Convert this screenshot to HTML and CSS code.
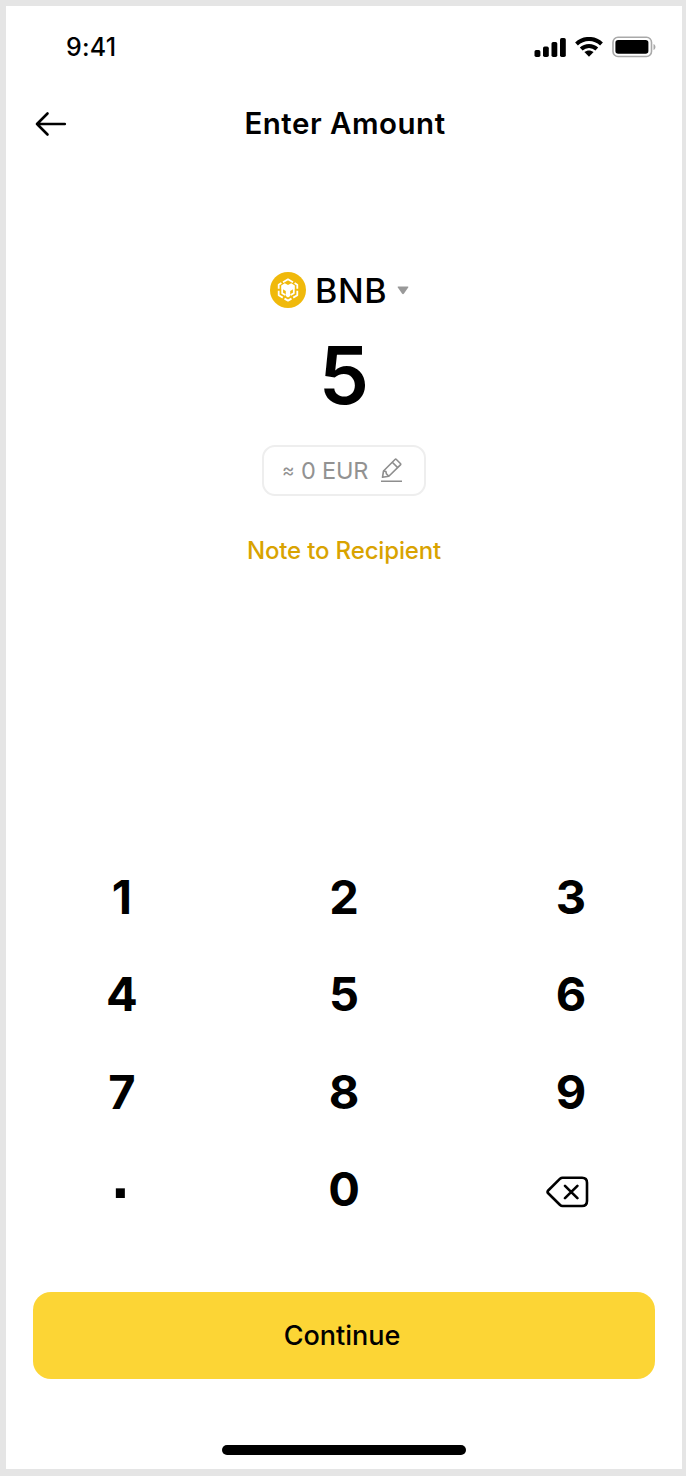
FILE: index.html
```html
<!DOCTYPE html>
<html lang="en">
<head>
<meta charset="utf-8">
<title>Enter Amount</title>
<link rel="stylesheet" href="styles.css">
</head>
<body>
<main class="phone">
  <div class="status">
    <span class="time">9:41</span>
    <div class="indicators">
      <svg width="32" height="20" viewBox="0 0 32 20"><rect x=".5" y="13" width="5.9" height="7" rx="1.7"/><rect x="9" y="9.5" width="5.8" height="10.5" rx="1.7"/><rect x="17.5" y="5" width="5.8" height="15" rx="1.7"/><rect x="26" y="1" width="5.8" height="19" rx="1.7"/></svg>
      <svg width="28" height="20" viewBox="0 0 28 20"><g fill="none" stroke="#000" stroke-width="4"><path d="M1.5 7C8.5.2 19.5.2 26.5 7"/><path d="M6.2 12C10.5 7.9 17.5 7.9 21.8 12"/></g><path d="M9.4 15.1c2.7-2.2 6.5-2.2 9.2 0L14 19.8z"/></svg>
      <svg width="45" height="22" viewBox="0 0 45 22"><rect x="1" y="1.3" width="38.5" height="19.2" rx="5" fill="#fff" stroke="#a9a9a9" stroke-width="1.6"/><rect x="3.4" y="4" width="33" height="13.8" rx="2.8"/><path d="M41.5 8c2.6.7 2.6 5.3 0 6z" fill="#a9a9a9"/></svg>
    </div>
  </div>
  <header class="header">
    <svg class="back" width="32" height="26" viewBox="0 0 32 26"><path d="M12.5 2.5 2 13l10.5 10.5M2 13h27.8"/></svg>
    <h1 class="title">Enter Amount</h1>
  </header>
  <section class="amount">
    <div class="coin">
      <svg width="36" height="36" viewBox="0 0 36 36"><circle cx="18" cy="18" r="18" fill="#f0b90b"/><g fill="none" stroke="#fff" stroke-width="1.8" stroke-linejoin="round"><path d="M13 10.2 18 7.3l5 2.9M24.6 11.1l2.7 1.6v4.1M27.3 18.8v4.4l-4.1 2.4M21.5 26.6 18 28.6l-3.5-2M12.8 25.6l-4.1-2.4v-4.4M8.7 16.8v-4.1l2.7-1.6"/><path d="M12.2 16v5.2l3.2 1.9M23.8 16v5.2l-3.2 1.9"/></g><path d="m11.2 13.4 3.6-2.1 3.2 1.7 3.2-1.7 3.6 2.1v2.8l-4.6 2.9v5L18 25.5l-2.2-1.4v-5l-4.6-2.9z" fill="#fff"/></svg>
      <span class="symbol">BNB</span>
      <svg class="caret" width="12" height="9" viewBox="0 0 12 9"><path d="M1.2.5h9.6q1 0 .4 1L7 7.6q-1 1.2-2 0L.8 1.5q-.6-1 .4-1z" fill="#999"/></svg>
    </div>
    <div class="value">5</div>
    <div class="fiat">
      <span class="approx">≈</span><span class="eur">0 EUR</span>
      <svg width="23" height="25" viewBox="0 0 23 25"><g fill="none" stroke="#8e8e8e" stroke-width="1.6" stroke-linejoin="round"><path d="m2.5 19.3 1-6.3L15 1.5q.7-.7 1.4 0l4 4q.7.7 0 1.4L8.8 18.3z"/><path d="m12.3 4.2 5.4 5.4M3.5 13l2.4.5.5 2.3 2.4 2.5M1 23.3h21"/></g></svg>
    </div>
    <div class="note">Note to Recipient</div>
  </section>
  <section class="keypad">
    <span>1</span><span>2</span><span>3</span>
    <span>4</span><span>5</span><span>6</span>
    <span>7</span><span>8</span><span>9</span>
    <span class="dot">.</span><span>0</span>
    <span class="erase"><svg width="43" height="32" viewBox="0 0 43 32"><g fill="none" stroke="#000" stroke-width="2.6" stroke-linejoin="round" stroke-linecap="round"><path d="M16.5 1.7H36q5 0 5 5V25q0 5-5 5H16.5q-1.3 0-2.4-1L2.2 17.3q-1.3-1.4 0-2.8L14.1 2.7q1.1-1 2.4-1zM19 9.8l12.4 12.4M31.4 9.8 19 22.2"/></g></svg></span>
  </section>
  <div class="button">Continue</div>
  <div class="home"></div>
</main>
</body>
</html>
```
FILE: styles.css
```css
* { box-sizing: border-box; }
body { margin: 0; padding: 6px 4px 7px 6px; background: #e5e5e5; font-family: Inter, "Open Sans", sans-serif; color: #000; }
svg { display: block; flex: none; }
.phone { height: 1463px; background: #fff; display: flex; flex-direction: column; align-items: center; overflow: hidden; }
.status { width: 100%; height: 82px; padding: 0 25px 0 60px; display: flex; align-items: center; justify-content: space-between; }
.time { font-size: 25px; font-weight: 500; line-height: 40px; letter-spacing: .2px; }
.indicators { display: flex; align-items: center; gap: 9px; }
.header { width: 100%; height: 72px; display: grid; grid-template-columns: 72px 1fr 72px; align-items: center; }
.back { margin-left: 29px; }
.back path { fill: none; stroke: #000; stroke-width: 2.6; stroke-linecap: round; stroke-linejoin: round; }
.title { margin: -2px 0 0; padding-left: 2px; text-align: center; font-size: 29.5px; font-weight: 600; line-height: 40px; letter-spacing: .5px; white-space: nowrap; }
.amount { height: 680px; padding-top: 106px; display: flex; flex-direction: column; align-items: center; }
.coin { height: 48px; display: flex; align-items: center; margin-right: 9px; }
.symbol { margin: 2px 11px 0 9px; font-size: 34px; font-weight: 500; line-height: 46px; width: 71px; letter-spacing: .6px; }
.value { height: 112px; margin-top: 5px; font-size: 80px; font-weight: 600; line-height: 112px; }
.fiat { width: 164px; height: 51px; margin-top: 14px; padding: 0 21px 0 18px; display: flex; align-items: center; border: 2px solid #eee; border-radius: 13px; color: #929292; font-size: 23.5px; line-height: 40px; }
.approx { font-size: 19px; width: 19px; }
.eur { flex: 1; padding-top: 1px; letter-spacing: -.2px; white-space: nowrap; }
.note { margin-top: 37px; font-size: 24px; font-weight: 500; line-height: 36px; letter-spacing: -.15px; color: #d9a300; white-space: nowrap; }
.keypad { width: 676px; display: grid; grid-template-columns: 232px 212px 232px; grid-template-rows: repeat(4, 97.3px); font-size: 47px; font-weight: 650; line-height: 97px; text-align: center; margin-top: 8px; }
.keypad span:nth-child(3n) { padding-left: 10px; }
.keypad .dot { padding-right: 3px; font-family: "Liberation Sans", sans-serif; font-size: 64px; font-weight: 700; line-height: 73px; }
.erase { display: flex; align-items: center; justify-content: center; padding: 7px 8px 0 0; }
.button { width: 622px; height: 87px; margin-top: 55px; padding-right: 4px; border-radius: 18px; background: #fcd535; text-align: center; font-size: 27px; font-weight: 500; line-height: 87px; }
.home { width: 244px; height: 10px; margin-top: 66px; border-radius: 5px; background: #000; }
```
